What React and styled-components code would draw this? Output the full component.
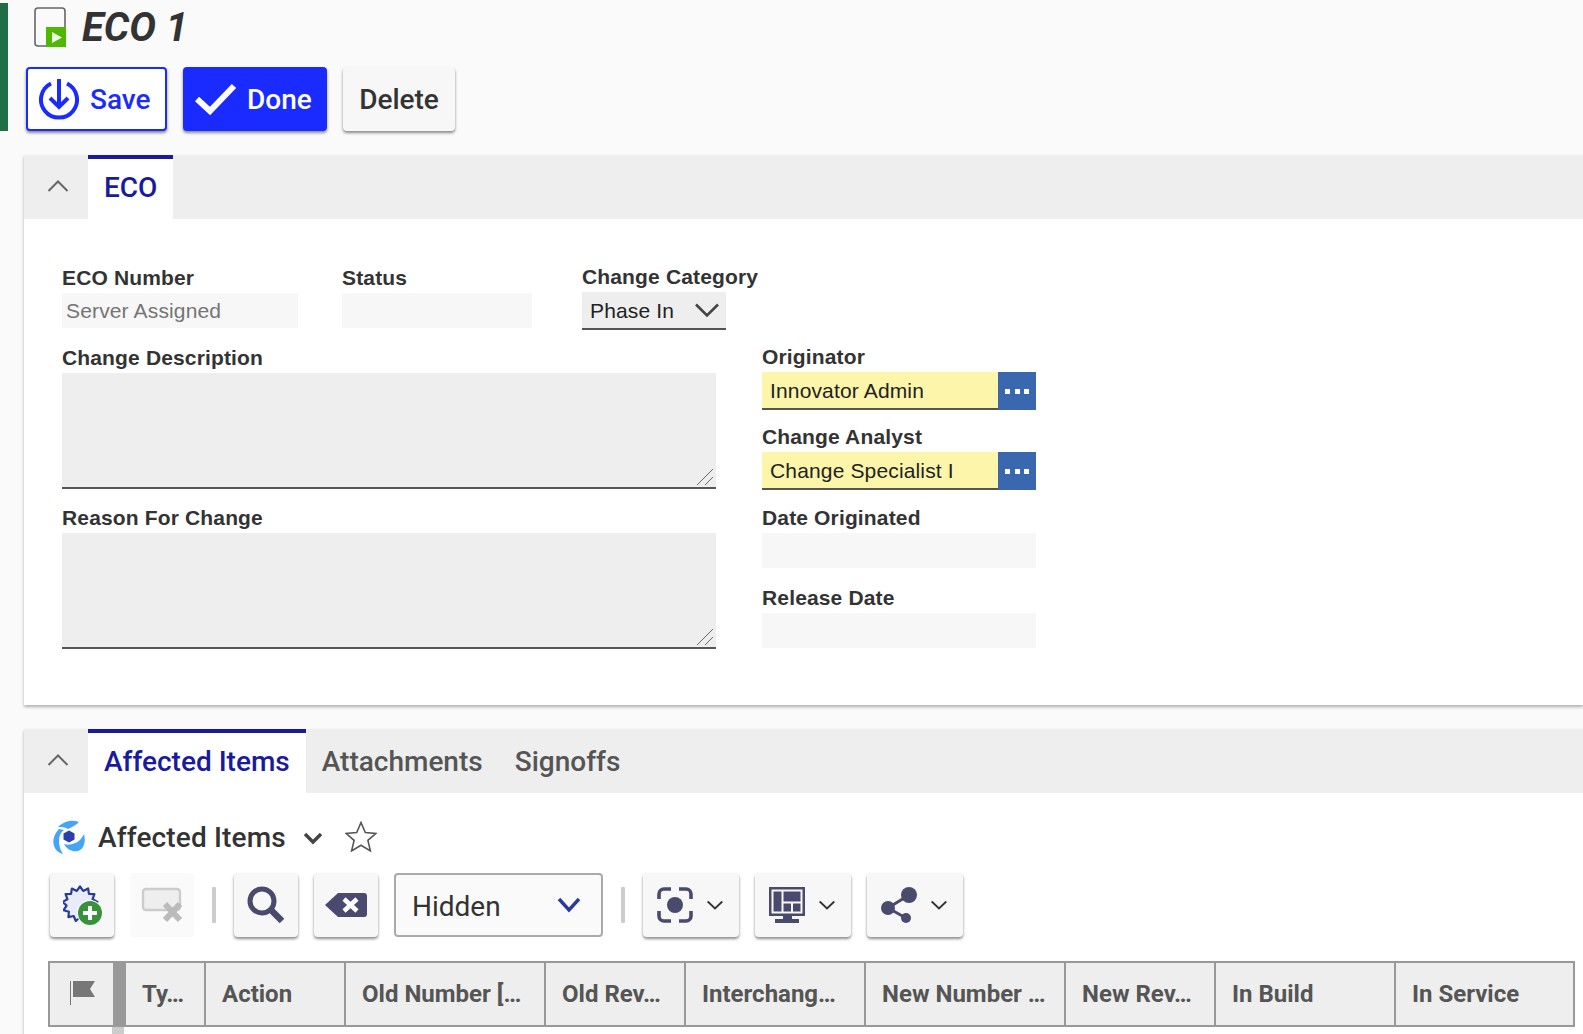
import React from 'react';
import styled, { createGlobalStyle } from 'styled-components';

const Global = createGlobalStyle`
  html, body { margin: 0; padding: 0; background: #fafafa; }
  body { width: 1583px; height: 1034px; overflow: hidden; font-family: Roboto, "Liberation Sans", sans-serif; }
  #root { width: 1583px; height: 1034px; overflow: hidden; }
  * { box-sizing: border-box; }
`;

const Page = styled.div`
  display: flex;
  flex-direction: column;
  height: 1034px;
  padding-top: 3px;
`;
const TopBar = styled.header`
  flex: none;
  height: 128px;
  border-left: 8px solid #1f6e46;
  padding-left: 18px;
  display: flex;
  flex-direction: column;
`;
const TitleRow = styled.div`
  height: 64px;
  display: flex;
  align-items: flex-start;
  padding: 4px 0 0 8px;
  gap: 15px;
`;
const Title = styled.h1`
  margin: -3px 0 0;
  font: italic 700 40px/48px Roboto, sans-serif;
  color: #333;
`;
const Actions = styled.div`
  display: flex;
  gap: 16px;
`;
const ActionButton = styled.button`
  height: 64px;
  width: ${p => p.$w}px;
  display: flex;
  align-items: center;
  justify-content: ${p => (p.$center ? 'center' : 'flex-start')};
  gap: ${p => p.$gap}px;
  padding: ${p => (p.$center ? 0 : `0 0 0 ${p.$pl}px`)};
  border-radius: 4px;
  border: ${p => (p.$kind === 'save' ? '2px solid #1a2bff' : 'none')};
  background: ${p => (p.$kind === 'save' ? '#fff' : p.$kind === 'done' ? '#1a2bff' : '#f7f7f7')};
  color: ${p => (p.$kind === 'save' ? '#1a2bff' : p.$kind === 'done' ? '#fff' : '#333')};
  font: 500 28px/1 Roboto, sans-serif;
  box-shadow: 0 2px 3px rgba(0, 0, 0, 0.45);
`;
const ButtonText = styled.span`
  padding-top: 2px;
`;

const Panel = styled.section`
  flex: none;
  margin-left: 24px;
  background: #fff;
  margin-top: ${p => p.$mt}px;
  height: ${p => p.$h}px;
  box-shadow: 0 2px 3px rgba(0, 0, 0, 0.3);
`;
const TabBar = styled.div`
  height: 64px;
  background: #eee;
  display: flex;
`;
const Collapse = styled.div`
  width: 64px;
  display: flex;
  align-items: center;
  justify-content: center;
  padding: 0 0 3px 4px;
`;
const Tab = styled.div`
  height: 64px;
  padding: 0 16px 2px;
  display: flex;
  align-items: center;
  font: 500 28px/1 Roboto, sans-serif;
  color: ${p => (p.$active ? '#1a1a9c' : '#555')};
  background: ${p => (p.$active ? '#fff' : 'transparent')};
  border-top: 4px solid ${p => (p.$active ? '#1a1a9c' : 'transparent')};
`;

const Form = styled.div`
  padding: 49px 0 0 38px;
  display: grid;
  grid-template-columns: 654px 274px;
  column-gap: 46px;
  row-gap: 18px;
  grid-template-areas: "top top" "left right";
  width: 974px;
`;
const TopRow = styled.div`
  grid-area: top;
  display: flex;
  height: 62px;
`;
const Stack = styled.div`
  display: flex;
  flex-direction: column;
  margin-top: ${p => p.$mt || 0}px;
`;
const Field = styled.div`
  display: flex;
  flex-direction: column;
  width: ${p => (p.$w ? `${p.$w}px` : 'auto')};
  margin-right: ${p => p.$mr || 0}px;
  margin-top: ${p => p.$mt || 0}px;
`;
const Label = styled.label`
  height: 25px;
  font: 700 21px/20px "Liberation Sans", Arial, sans-serif;
  letter-spacing: 0.15px;
  color: #333;
  white-space: nowrap;
`;
const ReadOnly = styled.div`
  height: 35px;
  background: #f7f7f7;
  padding-left: 4px;
  font: 400 21px/35px "Liberation Sans", Arial, sans-serif;
  letter-spacing: 0.15px;
  color: #757575;
`;
const SelectBox = styled.div`
  height: 38px;
  background: #eee;
  border-bottom: 2px solid #555;
  display: flex;
  align-items: center;
  justify-content: space-between;
  padding: 0 7px 0 8px;
  font: 400 21px/1 "Liberation Sans", Arial, sans-serif;
  letter-spacing: 0.15px;
  color: #222;
`;
const TextArea = styled.div`
  position: relative;
  height: ${p => p.$h}px;
  background: #eee;
  border-bottom: 2px solid #555;
`;
const Resize = styled.svg`
  position: absolute;
  right: 2px;
  bottom: 1px;
`;
const Lookup = styled.div`
  height: 38px;
  display: flex;
`;
const LookupInput = styled.div`
  flex: 1;
  background: #fdf5aa;
  border-bottom: 2px solid #555;
  padding-left: 8px;
  font: 400 21px/38px "Liberation Sans", Arial, sans-serif;
  letter-spacing: 0.15px;
  color: #222;
`;
const LookupButton = styled.div`
  width: 38px;
  background: #3a68b0;
  display: flex;
  align-items: center;
  justify-content: center;
  gap: 4.5px;
`;
const Dot = styled.span`
  width: 5px;
  height: 5px;
  background: #fff;
`;

const Body = styled.div`
  padding: 27px 0 0 24px;
`;
const ViewRow = styled.div`
  height: 34px;
  display: flex;
  align-items: center;
  padding-left: 5px;
`;
const ViewTitle = styled.div`
  margin: 0 17px 0 11px;
  padding-top: 2px;
  font: 500 28px/1 Roboto, sans-serif;
  letter-spacing: 0.15px;
  color: #333;
`;
const ChevronSlot = styled.span`
  display: flex;
  padding-top: 3px;
`;
const StarSlot = styled.span`
  display: flex;
  margin: 0 0 2px 22px;
`;
const Toolbar = styled.div`
  margin-top: 19px;
  height: 64px;
  display: flex;
  align-items: center;
  padding-left: 2px;
`;
const ToolButton = styled.button`
  width: ${p => p.$w || 64}px;
  height: 64px;
  margin-right: ${p => p.$mr ?? 16}px;
  border: none;
  border-radius: 4px;
  padding: 0 ${p => (p.$w ? 2 : 0)}px 0 0;
  background: ${p => (p.$disabled ? '#fafafa' : '#f7f7f7')};
  box-shadow: ${p => (p.$disabled ? 'none' : '0 2px 3px rgba(0,0,0,.45)')};
  display: flex;
  align-items: center;
  justify-content: center;
  gap: ${p => p.$gap || 0}px;
`;
const Sep = styled.div`
  width: 4px;
  height: 36px;
  background: #ccc;
  border-radius: 1px;
  margin-right: ${p => p.$mr}px;
`;
const Dropdown = styled.div`
  width: 209px;
  height: 64px;
  margin-right: 18px;
  border: 2px solid #aaa;
  border-radius: 4px;
  background: #fafafa;
  display: flex;
  align-items: center;
  justify-content: space-between;
  padding: 0 20px 0 16px;
  font: 400 28px/1 Roboto, sans-serif;
  color: #333;
`;
const DropdownText = styled.span`
  padding-top: 3px;
`;
const HeaderRow = styled.div`
  margin-top: 24px;
  width: 1527px;
  height: 66px;
  display: flex;
  border: 2px solid #999;
  background: #eee;
`;
const FlagCell = styled.div`
  flex: none;
  width: 63px;
  padding: 18px 0 0 20px;
`;
const Grip = styled.div`
  flex: none;
  width: 13px;
  background: #999;
`;
const HeadCell = styled.div`
  width: ${p => p.$w}px;
  flex: none;
  padding-left: 16px;
  border-right: ${p => (p.$last ? 'none' : '2px solid #999')};
  font: 700 24px/63px Roboto, sans-serif;
  color: #555;
  white-space: nowrap;
`;
const GripTail = styled.div`
  width: 12px;
  height: 7px;
  margin-left: 64px;
  background: #ccc;
`;

const DocIcon = () => (
  <svg width="33" height="41" viewBox="0 0 33 41">
    <rect x="1" y="1" width="30" height="38" rx="3" fill="none" stroke="#666" strokeWidth="1.6" />
    <rect x="12" y="20" width="20" height="20" fill="#4fb800" />
    <path d="M18 25v11l10-5.500z" fill="#f0fae6" />
  </svg>
);
const SaveIcon = () => (
  <svg width="42" height="42" viewBox="0 0 42 42" fill="none" stroke="#1a2bff" strokeWidth="4">
    <path d="M13 5.500A18 18 0 1 0 29 5.500" />
    <path d="M21 1v27M12 20l9 9 9-9" />
  </svg>
);
const CheckIcon = () => (
  <svg width="42" height="32" viewBox="0 0 42 32" fill="none" stroke="#fff" strokeWidth="6">
    <path d="M2 16l13 12L39 3" />
  </svg>
);
const UpIcon = () => (
  <svg width="22" height="14" viewBox="0 0 22 14" fill="none" stroke="#666" strokeWidth="2">
    <path d="M1.500 12L11 2.500l9.500 9.500" />
  </svg>
);
const SelChevron = () => (
  <svg width="24" height="15" viewBox="0 0 24 15" fill="none" stroke="#444" strokeWidth="2.6">
    <path d="M1 1.500l11 11 11-11" />
  </svg>
);
const ResizeMark = () => (
  <Resize width="18" height="18" viewBox="0 0 18 18" stroke="#666" strokeWidth="1">
    <path d="M1 17L17 1M9 17l8-8" />
  </Resize>
);
const LogoIcon = () => (
  <svg width="34" height="34" viewBox="0 0 34 34" fill="#42a5f5">
    <path d="M5 7C10 2 18-1 26 2 24 4 20 7 15 9 12 7 8 7 5 7z" />
    <path d="M6 9C2 13-1 20 1 26 3 31 6 33 10 34 7 30 6 25 6 20 6 16 8 12 11 10z" />
    <path d="M11 24C14 30 20 32 25 31 31 29 33 22 31 14 29 18 26 22 22 23 18 25 14 25 11 24z" />
    <path d="M16 10.500l5.500 3v6l-5.500 3-5.500-3v-6z" fill="#2a3fa8" />
  </svg>
);
const ViewChevron = () => (
  <svg width="20" height="13" viewBox="0 0 20 13" fill="none" stroke="#444" strokeWidth="3.4">
    <path d="M2 2l8 8 8-8" />
  </svg>
);
const StarIcon = () => (
  <svg width="32" height="31" viewBox="0 0 32 31" fill="none" stroke="#555" strokeWidth="1.6">
    <path d="M16 1.500l4.300 10 10.700.9-8.100 7 2.500 10.500L16 24.300 6.600 29.900l2.500-10.500-8.100-7 10.700-.9z" />
  </svg>
);
const gearPoints = Array.from({ length: 26 }, (_, i) => {
  const angle = (i * Math.PI) / 13 - Math.PI / 2;
  const r = i % 2 === 0 ? 17.5 : 13.5;
  return `${(17 + r * Math.cos(angle)).toFixed(1)},${(19 + r * Math.sin(angle)).toFixed(1)}`;
}).join(' ');
const AddIcon = () => (
  <svg width="42" height="41" viewBox="0 0 42 41" style={{ marginLeft: 4 }}>
    <polygon points={gearPoints} fill="#e8ebf8" stroke="#2a3a9c" strokeWidth="2.2" strokeLinejoin="round" />
    <circle cx="27" cy="28" r="13" fill="#fff" />
    <circle cx="27" cy="28" r="12" fill="#36923b" />
    <path d="M27 21v14M20 28h14" stroke="#fff" strokeWidth="4" />
  </svg>
);
const RemoveIcon = () => (
  <svg width="42" height="36" viewBox="0 0 42 36" fill="none">
    <rect x="2" y="2" width="37" height="21" rx="3" fill="#eee" stroke="#ccc" strokeWidth="2.4" />
    <path d="M24 17l15 16M39 17L24 33" stroke="#bbb" strokeWidth="6" />
  </svg>
);
const SearchIcon = () => (
  <svg width="38" height="38" viewBox="0 0 38 38" fill="none" stroke="#4a4a6e">
    <circle cx="15" cy="15" r="12" strokeWidth="5" />
    <path d="M24 24l11 11" strokeWidth="6.500" />
  </svg>
);
const BackspaceIcon = () => (
  <svg width="42" height="24" viewBox="0 0 42 24">
    <path d="M13 0h26a3 3 0 0 1 3 3v18a3 3 0 0 1-3 3H13L0 12z" fill="#4a4a6e" />
    <path d="M19 6l13 12M32 6L19 18" stroke="#fff" strokeWidth="4.5" />
  </svg>
);
const Chevron = () => (
  <svg width="16" height="10" viewBox="0 0 16 10" fill="none" stroke="#333" strokeWidth="1.8">
    <path d="M.7 1.500L8 8.500l7.300-7" />
  </svg>
);
const ScanIcon = () => (
  <svg width="36" height="36" viewBox="0 0 36 36" fill="none" stroke="#4a4a6e" strokeWidth="3.6">
    <path d="M2 12V7a5 5 0 0 1 5-5h7M22 2h7a5 5 0 0 1 5 5v5M34 24v5a5 5 0 0 1-5 5h-7M14 34H7a5 5 0 0 1-5-5v-5" />
    <circle cx="18" cy="18" r="8" fill="#4a4a6e" stroke="none" />
  </svg>
);
const MonitorIcon = () => (
  <svg width="36" height="36" viewBox="0 0 36 36" fill="#4a4a6e">
    <path fillRule="evenodd" d="M0 0h36v29H0zM2.500 2.500v24h31v-24z" />
    <path d="M4.500 4.500h8v20h-8zM14.500 4.500h17v10h-17zM14.500 16.500h7.500v8h-7.500zM24 16.500h7.500v8H24z" />
    <path d="M14 29h9v3h7v4H6v-4h8z" />
  </svg>
);
const ShareIcon = () => (
  <svg width="36" height="37" viewBox="0 0 36 37" fill="#4a4a6e">
    <path d="M7 21L28 8M7 21l18 10" stroke="#4a4a6e" strokeWidth="3" fill="none" />
    <circle cx="28" cy="8" r="8" />
    <circle cx="7" cy="21" r="7" />
    <circle cx="25" cy="31" r="5" />
  </svg>
);
const HiddenChevron = () => (
  <svg width="24" height="16" viewBox="0 0 24 16" fill="none" stroke="#2a3a9c" strokeWidth="3.4">
    <path d="M2 2l10 11L22 2" />
  </svg>
);
const FlagIcon = () => (
  <svg width="26" height="25" viewBox="0 0 26 25">
    <path d="M0 0h1v24H0z" fill="#777" />
    <path d="M3 0h22l-5 8 5 8H3z" fill="#777" />
  </svg>
);

const columns = [
  ['Ty…', 80],
  ['Action', 140],
  ['Old Number […', 200],
  ['Old Rev…', 140],
  ['Interchang…', 180],
  ['New Number …', 200],
  ['New Rev…', 150],
  ['In Build', 180],
  ['In Service', 177],
];

export default function App() {
  return (
    <Page>
      <Global />
      <TopBar>
        <TitleRow>
          <DocIcon />
          <Title>ECO 1</Title>
        </TitleRow>
        <Actions>
          <ActionButton $kind="save" $w={141} $pl={10} $gap={10}><SaveIcon /><ButtonText>Save</ButtonText></ActionButton>
          <ActionButton $kind="done" $w={144} $pl={12} $gap={10}><CheckIcon /><ButtonText>Done</ButtonText></ActionButton>
          <ActionButton $w={112} $center><ButtonText>Delete</ButtonText></ActionButton>
        </Actions>
      </TopBar>
      <Panel $mt={24} $h={550}>
        <TabBar>
          <Collapse><UpIcon /></Collapse>
          <Tab $active>ECO</Tab>
        </TabBar>
        <Form>
          <TopRow>
            <Field $w={236} $mr={44}>
              <Label>ECO Number</Label>
              <ReadOnly>Server Assigned</ReadOnly>
            </Field>
            <Field $w={190} $mr={50}>
              <Label>Status</Label>
              <ReadOnly />
            </Field>
            <Field $w={144} $mt={-1}>
              <Label>Change Category</Label>
              <SelectBox>Phase In<SelChevron /></SelectBox>
            </Field>
          </TopRow>
          <Stack>
            <Field>
              <Label>Change Description</Label>
              <TextArea $h={116}><ResizeMark /></TextArea>
            </Field>
            <Field $mt={19}>
              <Label>Reason For Change</Label>
              <TextArea $h={116}><ResizeMark /></TextArea>
            </Field>
          </Stack>
          <Stack $mt={-1}>
            <Field>
              <Label>Originator</Label>
              <Lookup><LookupInput>Innovator Admin</LookupInput><LookupButton><Dot /><Dot /><Dot /></LookupButton></Lookup>
            </Field>
            <Field $mt={17}>
              <Label>Change Analyst</Label>
              <Lookup><LookupInput>Change Specialist I</LookupInput><LookupButton><Dot /><Dot /><Dot /></LookupButton></Lookup>
            </Field>
            <Field $mt={18}>
              <Label>Date Originated</Label>
              <ReadOnly />
            </Field>
            <Field $mt={20}>
              <Label>Release Date</Label>
              <ReadOnly />
            </Field>
          </Stack>
        </Form>
      </Panel>
      <Panel $mt={24} $h={400}>
        <TabBar>
          <Collapse><UpIcon /></Collapse>
          <Tab $active>Affected Items</Tab>
          <Tab>Attachments</Tab>
          <Tab>Signoffs</Tab>
        </TabBar>
        <Body>
          <ViewRow>
            <LogoIcon />
            <ViewTitle>Affected Items</ViewTitle>
            <ChevronSlot><ViewChevron /></ChevronSlot>
            <StarSlot><StarIcon /></StarSlot>
          </ViewRow>
          <Toolbar>
            <ToolButton><AddIcon /></ToolButton>
            <ToolButton $disabled $mr={18}><RemoveIcon /></ToolButton>
            <Sep $mr={18} />
            <ToolButton><SearchIcon /></ToolButton>
            <ToolButton><BackspaceIcon /></ToolButton>
            <Dropdown><DropdownText>Hidden</DropdownText><HiddenChevron /></Dropdown>
            <Sep $mr={18} />
            <ToolButton $w={96} $gap={14}><ScanIcon /><Chevron /></ToolButton>
            <ToolButton $w={96} $gap={14}><MonitorIcon /><Chevron /></ToolButton>
            <ToolButton $w={96} $gap={14}><ShareIcon /><Chevron /></ToolButton>
          </Toolbar>
          <HeaderRow>
            <FlagCell><FlagIcon /></FlagCell>
            <Grip />
            {columns.map(([name, w], i) => (
              <HeadCell key={name} $w={w} $last={i === columns.length - 1}>{name}</HeadCell>
            ))}
          </HeaderRow>
          <GripTail />
        </Body>
      </Panel>
    </Page>
  );
}
